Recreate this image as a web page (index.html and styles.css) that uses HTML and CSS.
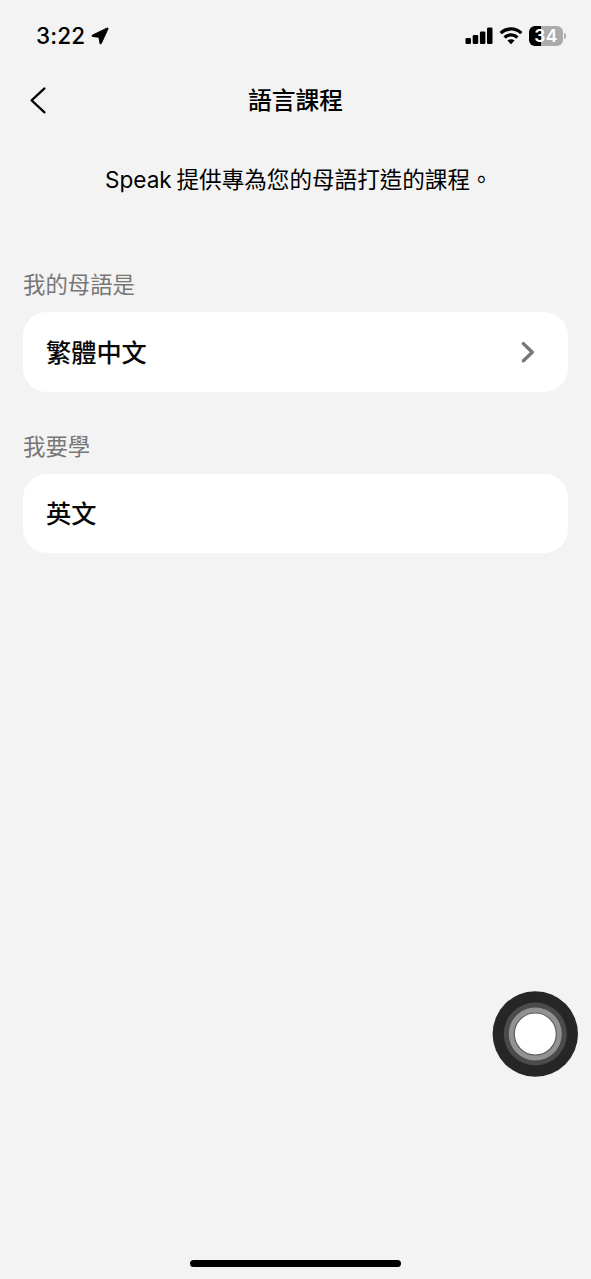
FILE: index.html
```html
<!DOCTYPE html>
<html lang="zh-Hant">
<head>
<meta charset="utf-8">
<meta name="viewport" content="width=device-width, initial-scale=1">
<title>語言課程</title>
<link rel="stylesheet" href="styles.css">
</head>
<body>
<div class="screen">
  <div class="status">
    <span class="time">3:22</span>
    <svg class="location" width="18" height="18" viewBox="0 0 18 18"><path d="M16.200 1 1.300 8.200c-.6.4-.4 1.200.2 1.300l6 .7c.3 0 .5.200.5.500l1 5.700c.1.700.9.8 1.200.2L17 1.800c.2-.6-.2-1-.8-.8Z"/></svg>
    <svg class="signal" width="28" height="18" viewBox="0 0 28 18"><rect x=".5" y="11" width="5.500" height="6" rx="1.300"/><rect x="7.700" y="8" width="5.500" height="9" rx="1.300"/><rect x="14.900" y="4.500" width="5.500" height="12.500" rx="1.300"/><rect x="22" y=".5" width="5.500" height="16.500" rx="1.300"/></svg>
    <svg class="wifi" width="24" height="18" viewBox="0 0 24 18"><g fill="none" stroke="#000" stroke-width="3.300"><path d="M1.700 6.200a14.600 14.600 0 0 1 20.600 0"/><path d="M5.600 10.500a9.100 9.100 0 0 1 12.800 0"/></g><path d="M8.400 13.600a5.200 5.200 0 0 1 7.200 0L12 17.200Z"/></svg>
    <div class="battery"><span class="level">34</span><i class="cap"></i></div>
  </div>
  <header class="nav">
    <svg class="back" width="18" height="28" viewBox="0 0 18 28"><path d="M15.500 2.400 2.600 14.400l12.900 12"/></svg>
    <h1 class="title">語言課程</h1>
  </header>
  <p class="intro">Speak 提供專為您的母語打造的課程。</p>
  <main class="sections">
    <section class="section">
      <h2 class="label">我的母語是</h2>
      <div class="card"><span class="value">繁體中文</span>
        <svg class="chevron" width="16" height="24" viewBox="0 0 16 24"><path d="m3.400 3.600 8.900 8.600-8.900 8.600"/></svg>
      </div>
    </section>
    <section class="section">
      <h2 class="label">我要學</h2>
      <div class="card"><span class="value">英文</span></div>
    </section>
  </main>
  <svg class="assistive" width="86" height="86" viewBox="0 0 86 86"><circle cx="43.300" cy="43" r="42.700" fill="#262626"/><circle cx="43.300" cy="43" r="31.500" fill="#4b4b4b"/><circle cx="43.300" cy="43" r="26.500" fill="#929292"/><circle cx="43.300" cy="43" r="21" fill="#fff" stroke="#5c5c5c" stroke-width="1.200"/></svg>
  <div class="home"></div>
</div>
</body>
</html>
```
FILE: styles.css
```css
* { box-sizing: border-box; margin: 0; padding: 0; }
body { background: #f3f3f3; color: #000; font-family: Inter, "Noto Sans CJK TC", sans-serif; }
.screen { position: relative; display: flex; flex-direction: column; width: 591px; height: 1279px; overflow: hidden; }
.status { display: flex; align-items: center; height: 71px; padding: 0 25px 0 36px; }
.time { font-size: 22.5px; font-weight: 500; line-height: 28px; letter-spacing: .15px; }
.location { margin-left: 6px; stroke: #000; stroke-width: 1; stroke-linejoin: round; }
.signal { margin-left: auto; }
.wifi { margin-left: 6px; }
.battery { position: relative; display: flex; justify-content: center; align-items: center; width: 34px; height: 20px; margin-left: 6px; margin-right: 3px; border-radius: 6px; background: linear-gradient(90deg, #000 35%, #ababab 35%); }
.level { color: #fff; font-size: 17.5px; font-weight: 600; line-height: 20px; letter-spacing: .3px; }
.cap { position: absolute; right: -3px; top: 7px; width: 2px; height: 6px; border-radius: 0 2px 2px 0; background: #ababab; }
.nav { display: grid; grid-template-columns: 60px 1fr 60px; align-items: center; height: 59px; }
.back { margin: 0 0 2px 29px; fill: none; stroke: #000; stroke-width: 2.2; stroke-linecap: round; stroke-linejoin: round; }
.title { font-size: 23.8px; font-weight: 500; line-height: 36px; text-align: center; white-space: nowrap; }
.intro { margin-top: 32px; padding-left: 105px; font-size: 22.6px; line-height: 36px; letter-spacing: -.02px; word-spacing: -1.5px; white-space: nowrap; }
.sections { display: flex; flex-direction: column; gap: 38px; margin-top: 70px; padding: 0 23px; }
.section { display: flex; flex-direction: column; gap: 11px; }
.label { color: #777; font-size: 22.4px; font-weight: 400; line-height: 33px; }
.card { display: flex; align-items: center; justify-content: space-between; height: 79.5px; padding: 0 32px 0 23px; border-radius: 24px; background: #fff; }
.value { padding-top: 2px; color: #080808; font-size: 25.2px; font-weight: 500; line-height: 36px; }
.chevron { fill: none; stroke: #777; stroke-width: 3.4; stroke-linecap: round; stroke-linejoin: round; }
.assistive { position: absolute; left: 492px; top: 991px; }
.home { width: 211px; height: 7px; margin: auto auto 12px 190px; border-radius: 4px; background: #000; }
```
